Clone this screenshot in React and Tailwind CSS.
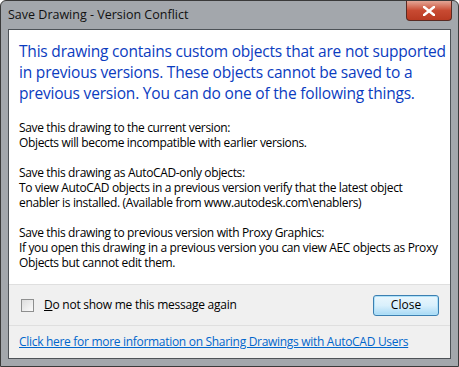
import { useState } from 'react'

const FONT = { fontFamily: '"Open Sans", "Noto Sans", "Liberation Sans", sans-serif' }

function CloseGlyph() {
  return (
    <svg width="12" height="10" viewBox="0 0 12 10">
      <path d="M1 1 L11 9 M11 1 L1 9" stroke="#fff" strokeWidth="2.6" strokeLinecap="square" />
    </svg>
  )
}

export default function App() {
  const [dontShow, setDontShow] = useState(false)

  return (
    <div
      className="w-[459px] h-[367px] flex flex-col bg-[#a3a7ac] border border-[#3a3a3a] rounded-t-[6px] overflow-hidden"
      style={FONT}
    >
      {/* Title bar */}
      <div className="h-[28px] flex items-start shrink-0">
        <span className="pl-[7px] pt-[5px] text-[12.5px] text-[#111]">
          Save Drawing - Version Conflict
        </span>
        <div className="ml-auto mr-[6px] w-[46px] h-[20px] rounded-b-[4px] border border-t-0 border-[#5a2a22] bg-gradient-to-b from-[#e3a596] via-[#c84a32] to-[#b93a22] flex items-center justify-center">
          <CloseGlyph />
        </div>
      </div>

      {/* Client area */}
      <div className="mx-[7px] mb-[7px] flex-1 flex flex-col border border-[#4d5257] bg-[#f0f0f0]">
        <div className="bg-white h-[254px] pl-[10px] pr-[3px] pt-[11px] overflow-hidden">
          <p className="text-[15.5px] leading-[21px] text-[#0b3cc0] tracking-[-0.2px]">
            This drawing contains custom objects that are not supported in previous versions. These objects cannot be saved to a previous version. You can do one of the following things.
          </p>
          <div className="mt-[16px] text-[12px] text-black tracking-[-0.35px] flex flex-col gap-[15px]">
            <p className="leading-[15px]">
              Save this drawing to the current version:
              <br />
              Objects will become incompatible with earlier versions.
            </p>
            <p className="leading-[15px]">
              Save this drawing as AutoCAD-only objects:
              <br />
              To view AutoCAD objects in a previous version verify that the latest object
              <br />
              enabler is installed. (Available from www.autodesk.com\enablers)
            </p>
            <p className="leading-[15px]">
              Save this drawing to previous version with Proxy Graphics:
              <br />
              If you open this drawing in a previous version you can view AEC objects as Proxy
              <br />
              Objects but cannot edit them.
            </p>
          </div>
        </div>

        <div className="h-[41px] border-t border-[#dfdfdf] flex items-center pl-[12px] pr-[11px]">
          <button
            onClick={() => setDontShow(!dontShow)}
            className="w-[13px] h-[13px] border border-[#8e8f8f] bg-gradient-to-br from-[#dcdcdc] to-[#fbfbfb] flex items-center justify-center text-[10px] leading-none"
          >
            {dontShow ? '✓' : ''}
          </button>
          <span className="ml-[10px] text-[12px] text-black tracking-[-0.25px]">
            <span className="underline">D</span>o not show me this message again
          </span>
          <button className="ml-auto w-[66px] h-[21px] rounded-[3px] border border-[#3c7fb1] bg-gradient-to-b from-[#eaf6fd] via-[#d9f0fc] to-[#a7d9f5] text-[12px] text-black shadow-[inset_0_0_0_1px_#aee1f9]">
            Close
          </button>
        </div>

        <div className="flex-1 border-t border-[#dfdfdf] flex items-center px-[10px]">
          <a className="text-[12px] text-[#0066cc] underline tracking-[-0.3px]" href="#">
            Click here for more information on Sharing Drawings with AutoCAD Users
          </a>
        </div>
      </div>
    </div>
  )
}
